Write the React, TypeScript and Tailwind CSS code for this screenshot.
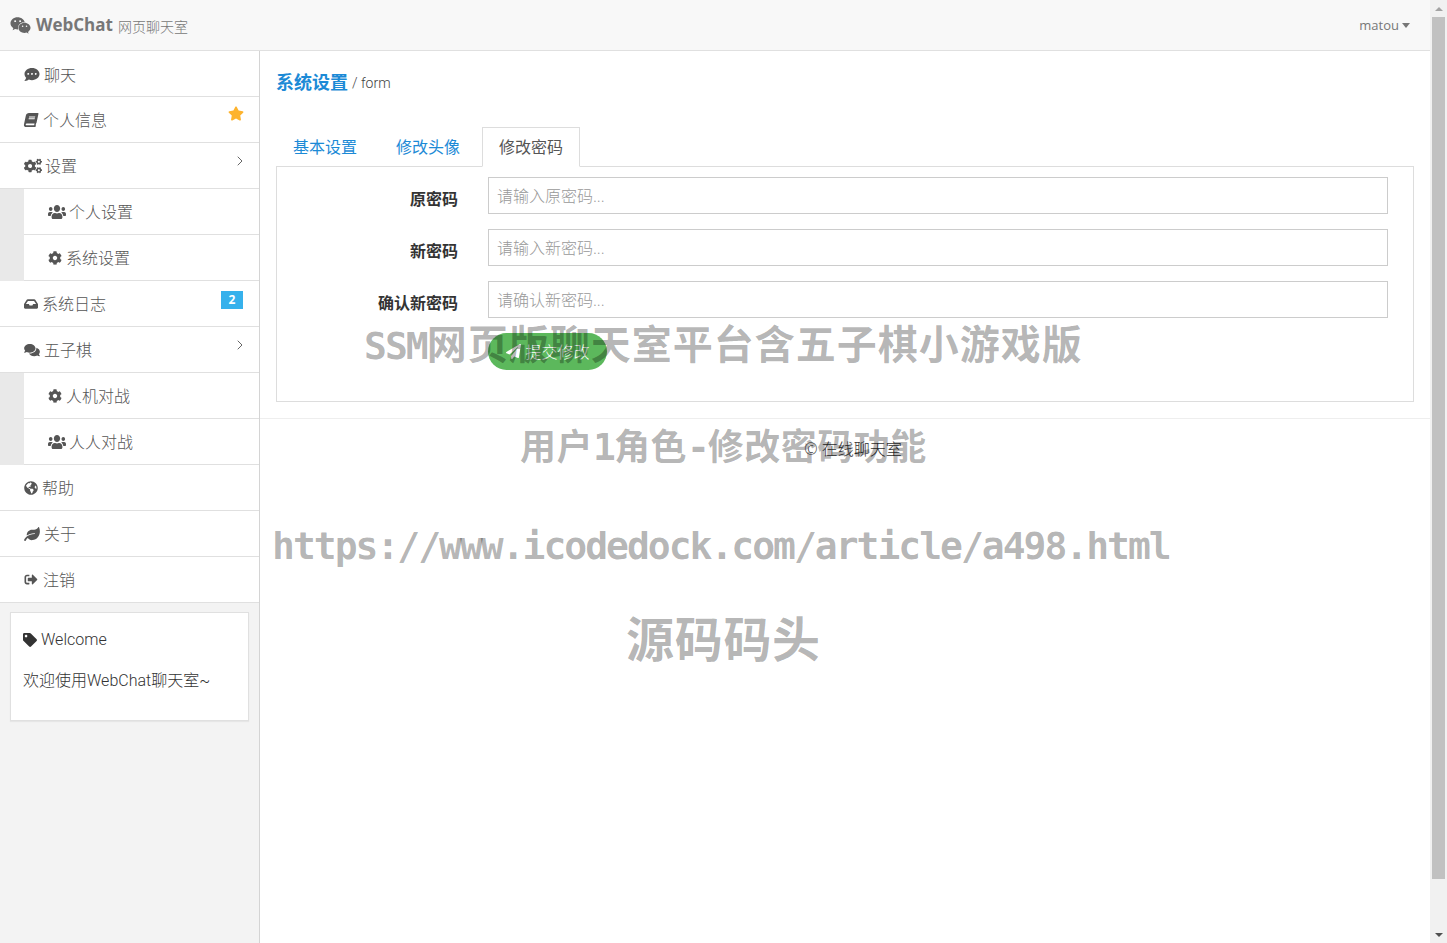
import React from "react";
import {
  FaWeixin,
  FaCommentDots,
  FaBook,
  FaCogs,
  FaUsers,
  FaCog,
  FaInbox,
  FaComments,
  FaGlobeAmericas,
  FaLeaf,
  FaSignOutAlt,
  FaTag,
  FaPaperPlane,
  FaStar,
} from "react-icons/fa";
import { ChevronRight } from "lucide-react";

const fontBody = "font-['Open_Sans','Noto_Sans_CJK_SC',sans-serif]";
const fontThin = "font-['Roboto','Noto_Sans_CJK_SC',sans-serif]";

type MenuItem = {
  label: string;
  icon: React.ReactNode;
  sub?: boolean;
  extra?: "star" | "arrow" | "badge";
  gap: string;
};

const users = <FaUsers preserveAspectRatio="none" className="w-[18px] h-[16px]" />;

const menu: MenuItem[] = [
  { label: "聊天", icon: <FaCommentDots className="w-[16px] h-[15px]" />, gap: "gap-[4px]" },
  { label: "个人信息", icon: <FaBook className="w-[14px] h-[14px] -skew-x-12" />, extra: "star", gap: "gap-[5px]" },
  { label: "设置", icon: <FaCogs className="w-[18px] h-[16px]" />, extra: "arrow", gap: "gap-[3px]" },
  { label: "个人设置", icon: users, sub: true, gap: "gap-[3px]" },
  { label: "系统设置", icon: <FaCog className="w-[14px] h-[14px]" />, sub: true, gap: "gap-[4px]" },
  { label: "系统日志", icon: <FaInbox className="w-[14px] h-[14px]" />, extra: "badge", gap: "gap-[4px]" },
  { label: "五子棋", icon: <FaComments className="w-[16px] h-[14px]" />, extra: "arrow", gap: "gap-[4px]" },
  { label: "人机对战", icon: <FaCog className="w-[14px] h-[14px]" />, sub: true, gap: "gap-[4px]" },
  { label: "人人对战", icon: users, sub: true, gap: "gap-[3px]" },
  { label: "帮助", icon: <FaGlobeAmericas className="w-[14px] h-[14px]" />, gap: "gap-[4px]" },
  { label: "关于", icon: <FaLeaf className="w-[16px] h-[14px]" />, gap: "gap-[4px]" },
  { label: "注销", icon: <FaSignOutAlt className="w-[14px] h-[13px]" />, gap: "gap-[5px]" },
];

const fields = [
  { label: "原密码", placeholder: "请输入原密码..." },
  { label: "新密码", placeholder: "请输入新密码..." },
  { label: "确认新密码", placeholder: "请确认新密码..." },
];

const latin = "font-['DejaVu_Sans_Mono',monospace] text-[38px] tracking-[-2px]";

const Watermark = () => (
  <div className="absolute inset-0 pointer-events-none font-bold text-black/30 font-['Noto_Sans_CJK_SC',sans-serif]">
    <div className="absolute left-[364px] top-[315px] text-[40px] leading-[54px] whitespace-nowrap tracking-[1px]">
      <span className={latin}>SSM</span>网页版聊天室平台含五子棋小游戏版
    </div>
    <div className="absolute left-[520px] top-[417px] text-[36px] leading-[54px] whitespace-nowrap tracking-[0.5px]">
      用户<span className={latin}>1</span>角色<span className={latin}>-</span>修改密码功能
    </div>
    <div className={`absolute left-[272px] top-[519px] leading-[54px] whitespace-nowrap ${latin}`}>
      https://www.icodedock.com/article/a498.html
    </div>
    <div className="absolute left-[626px] top-[608px] text-[48px] leading-[56px] whitespace-nowrap tracking-[0.7px]">
      源码码头
    </div>
  </div>
);

const Sidebar = () => (
  <aside className="w-[260px] shrink-0 bg-[#f3f3f3] border-r border-[#d4d4d4]">
    {menu.map((item, idx) => (
      <div key={item.label} className={item.sub ? "bg-[#e9e9e9] pl-[24px]" : ""}>
        <div
          className={`relative h-[46px] bg-white border-b border-[#e0e0e0] flex items-center pl-[24px] text-[#555] text-[16px] ${item.gap} ${
            idx === 0 ? "pt-[2px]" : ""
          }`}
        >
          {item.icon}
          <span className="font-light">{item.label}</span>
          {item.extra === "star" && (
            <FaStar className="absolute right-[15px] top-[9px] w-[16px] h-[15px] text-[#fdb32e]" />
          )}
          {item.extra === "arrow" && (
            <ChevronRight strokeWidth={1.5} className="absolute right-[11px] top-[10px] w-[16px] h-[16px] text-[#666]" />
          )}
          {item.extra === "badge" && (
            <span className="absolute right-[16px] top-[10px] w-[22px] h-[18px] bg-[#36b1ec] text-white text-[12px] font-bold leading-[18px] text-center">
              2
            </span>
          )}
        </div>
      </div>
    ))}
    <div
      className={`mt-[9px] mx-[10px] h-[109px] bg-white border border-[#e0e0e0] shadow-[0_1px_1px_rgba(0,0,0,0.05)] pt-[16px] px-[12px] text-[16px] font-light text-[#333] ${fontThin}`}
    >
      <div className="flex items-center gap-[4px] leading-[22px]">
        <FaTag className="w-[14px] h-[14px] text-[#333]" />
        <span>Welcome</span>
      </div>
      <p className="mt-[19px] leading-[22px]">欢迎使用WebChat聊天室~</p>
    </div>
  </aside>
);

const PasswordForm = () => (
  <div className="border border-[#ddd] h-[236px] pt-[10px] pr-[25px]">
    {fields.map((f) => (
      <div key={f.label} className="flex mb-[15px] h-[37px]">
        <label className="w-[181px] shrink-0 text-right text-[16px] font-bold text-[#333] leading-[44px]">{f.label}</label>
        <input
          readOnly
          placeholder={f.placeholder}
          className="ml-[30px] flex-1 h-[37px] border border-[#ccc] px-[8px] text-[16px] font-light placeholder:text-[#999] outline-none"
        />
      </div>
    ))}
    <div className="ml-[211px]">
      <button className="w-[119px] h-[37px] pl-[1px] rounded-full bg-[#5cb85c] text-white text-[16px] font-light flex items-center justify-center gap-[4px]">
        <FaPaperPlane className="w-[15px] h-[15px]" />
        提交修改
      </button>
    </div>
  </div>
);

const Scrollbar = () => (
  <div className="w-[17px] shrink-0 bg-[#f1f1f1] flex flex-col items-center">
    <div className="h-[17px] flex items-center justify-center">
      <div className="w-0 h-0 border-x-[4px] border-x-transparent border-b-[4px] border-b-[#a3a3a3]" />
    </div>
    <div className="w-[13px] h-[862px] bg-[#c1c1c1]" />
    <div className="flex-1 flex items-end pb-[6px]">
      <div className="w-0 h-0 border-x-[4px] border-x-transparent border-t-[4px] border-t-[#505050]" />
    </div>
  </div>
);

export default function App() {
  return (
    <div className={`relative flex h-[943px] w-full overflow-hidden bg-white ${fontBody}`}>
      <div className="flex-1 min-w-0 flex flex-col">
        <header className="h-[51px] shrink-0 bg-[#f8f8f8] border-b border-[#e0e0e0] flex items-center justify-between pl-[10px] pr-[20px] text-[#777]">
          <div className="flex items-center">
            <FaWeixin className="w-[21px] h-[19px] text-[#666]" />
            <span className="ml-[5px] text-[17px] font-bold text-[#777]">WebChat</span>
            <span className="ml-[5px] mt-[3px] text-[14px] font-light">网页聊天室</span>
          </div>
          <div className="flex items-center gap-[3px] text-[13px] pt-[1px]">
            matou
            <span className="w-0 h-0 border-x-[4.5px] border-x-transparent border-t-[5px] border-t-[#777]" />
          </div>
        </header>
        <div className="flex-1 flex min-h-0">
          <Sidebar />
          <main className="flex-1 min-w-0">
            <div className="px-[16px] pt-[19px]">
              <div className="h-[26px] flex items-center gap-[4px]">
                <span className="text-[18px] font-bold text-[#1c8ad6] -mt-[2px]">系统设置</span>
                <span className={`text-[14px] text-[#444] mt-[1px] font-light ${fontThin}`}>/ form</span>
              </div>
              <div className="mt-[31px] flex h-[40px] text-[16px] relative z-10">
                <div className="w-[98px] text-center text-[#1c8ad6] leading-[40px]">基本设置</div>
                <div className="w-[108px] text-center text-[#1c8ad6] leading-[40px]">修改头像</div>
                <div className="w-[98px] h-[40px] text-center text-[#555] leading-[39px] bg-white border border-[#ddd] border-b-white">
                  修改密码
                </div>
              </div>
              <div className="-mt-px">
                <PasswordForm />
              </div>
            </div>
            <footer className="mt-[16px] border-t border-[#eee] pt-[18px] pl-[16px] text-center text-[16px] font-light text-[#333]">
              © 在线聊天室
            </footer>
          </main>
        </div>
      </div>
      <Scrollbar />
      <Watermark />
    </div>
  );
}
